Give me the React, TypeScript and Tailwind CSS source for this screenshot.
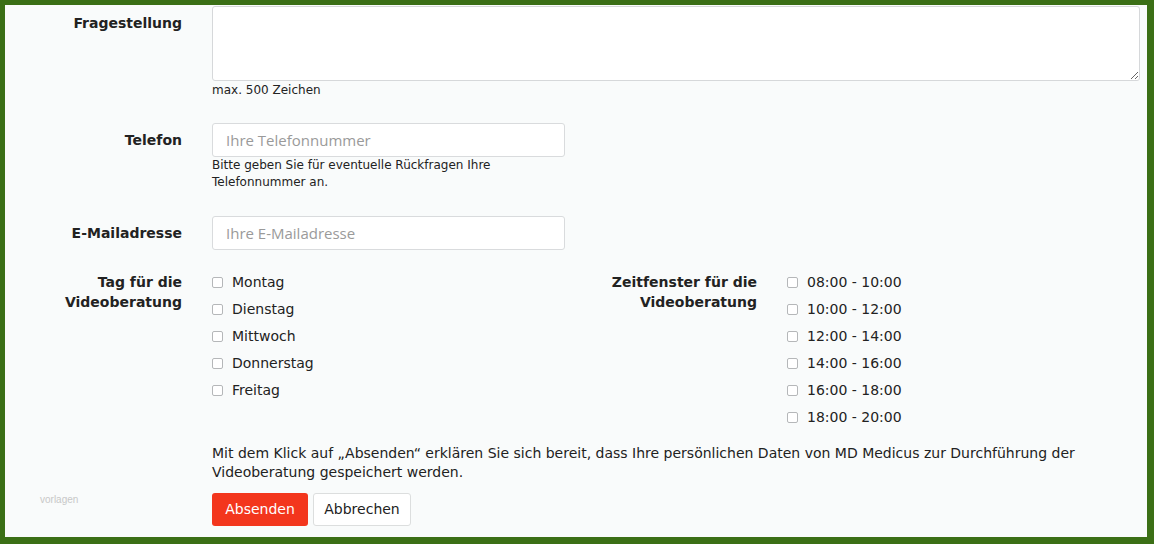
export default function App() {
  const days = ["Montag", "Dienstag", "Mittwoch", "Donnerstag", "Freitag"];
  const slots = [
    "08:00 - 10:00",
    "10:00 - 12:00",
    "12:00 - 14:00",
    "14:00 - 16:00",
    "16:00 - 18:00",
    "18:00 - 20:00",
  ];

  return (
    <div className="relative w-[1154px] h-[544px] overflow-hidden border-t-[5px] border-l-[5px] border-r-[7px] border-b-[7px] border-[#3b6f16] bg-[#f9fbfb] pt-px text-[#222] font-['DejaVu_Sans',Verdana,sans-serif]">
      {/* Fragestellung */}
      <div className="flex gap-[30px]">
        <label className="w-[177px] shrink-0 pt-[7px] text-right text-[14px] font-bold leading-[20px]">
          Fragestellung
        </label>
        <div className="flex-1 pr-[7px]">
          <textarea className="block w-full h-[75px] rounded-[3px] border border-[#d6d8da] bg-white" />
          <p className="pt-px text-[12px] leading-[17px]">max. 500 Zeichen</p>
        </div>
      </div>

      {/* Telefon */}
      <div className="mt-[24px] flex gap-[30px]">
        <label className="w-[177px] shrink-0 pt-[7px] text-right text-[14px] font-bold leading-[20px]">
          Telefon
        </label>
        <div>
          <input
            type="text"
            placeholder="Ihre Telefonnummer"
            className="block w-[353px] h-[34px] rounded-[3px] border border-[#d9dbdd] bg-white px-[13px] text-[15px] font-['Open_Sans',Arial,sans-serif] placeholder:text-[#9a9a9a]"
          />
          <p className="text-[12px] leading-[17px]">
            Bitte geben Sie für eventuelle Rückfragen Ihre
            <br />
            Telefonnummer an.
          </p>
        </div>
      </div>

      {/* E-Mail */}
      <div className="mt-[25px] flex gap-[30px]">
        <label className="w-[177px] shrink-0 pt-[7px] text-right text-[14px] font-bold leading-[20px]">
          E-Mailadresse
        </label>
        <input
          type="text"
          placeholder="Ihre E-Mailadresse"
          className="block w-[353px] h-[34px] rounded-[3px] border border-[#d9dbdd] bg-white px-[13px] text-[15px] font-['Open_Sans',Arial,sans-serif] placeholder:text-[#9a9a9a]"
        />
      </div>

      {/* Tag + Zeitfenster */}
      <div className="mt-[15px] flex gap-[30px]">
        <label className="w-[177px] shrink-0 pt-[7px] text-right text-[14px] font-bold leading-[20px]">
          Tag für die
          <br />
          Videoberatung
        </label>
        <div className="w-[338px] shrink-0 pt-[7px] flex flex-col gap-[7px]">
          {days.map((d) => (
            <CheckRow key={d} text={d} />
          ))}
        </div>
        <label className="w-[177px] shrink-0 pt-[7px] text-right text-[14px] font-bold leading-[20px]">
          Zeitfenster für die
          <br />
          Videoberatung
        </label>
        <div className="pt-[7px] flex flex-col gap-[7px]">
          {slots.map((s) => (
            <CheckRow key={s} text={s} />
          ))}
        </div>
      </div>

      {/* Consent */}
      <p className="mt-[17px] ml-[207px] text-[14px] leading-[19px]">
        Mit dem Klick auf „Absenden“ erklären Sie sich bereit, dass Ihre persönlichen Daten von MD Medicus zur Durchführung der
        <br />
        Videoberatung gespeichert werden.
      </p>

      <div className="mt-[11px] ml-[207px] flex gap-[5px]">
        <button className="w-[96px] h-[33px] rounded-[3px] bg-[#f3361d] text-[14px] text-white">
          Absenden
        </button>
        <button className="w-[98px] h-[33px] rounded-[3px] border border-[#dcdede] bg-white text-[14px] text-[#222]">
          Abbrechen
        </button>
      </div>

      <span className="absolute left-[35px] top-[487px] text-[10px] text-[#c8c8c8] font-['Liberation_Sans',Arial,sans-serif]">
        vorlagen
      </span>
    </div>
  );
}

function CheckRow({ text }: { text: string }) {
  return (
    <div className="flex items-center gap-[9px] text-[14px] leading-[20px]">
      <span className="block w-[11px] h-[11px] rounded-[2px] border border-[#b5b7b9] bg-white" />
      <span>{text}</span>
    </div>
  );
}
